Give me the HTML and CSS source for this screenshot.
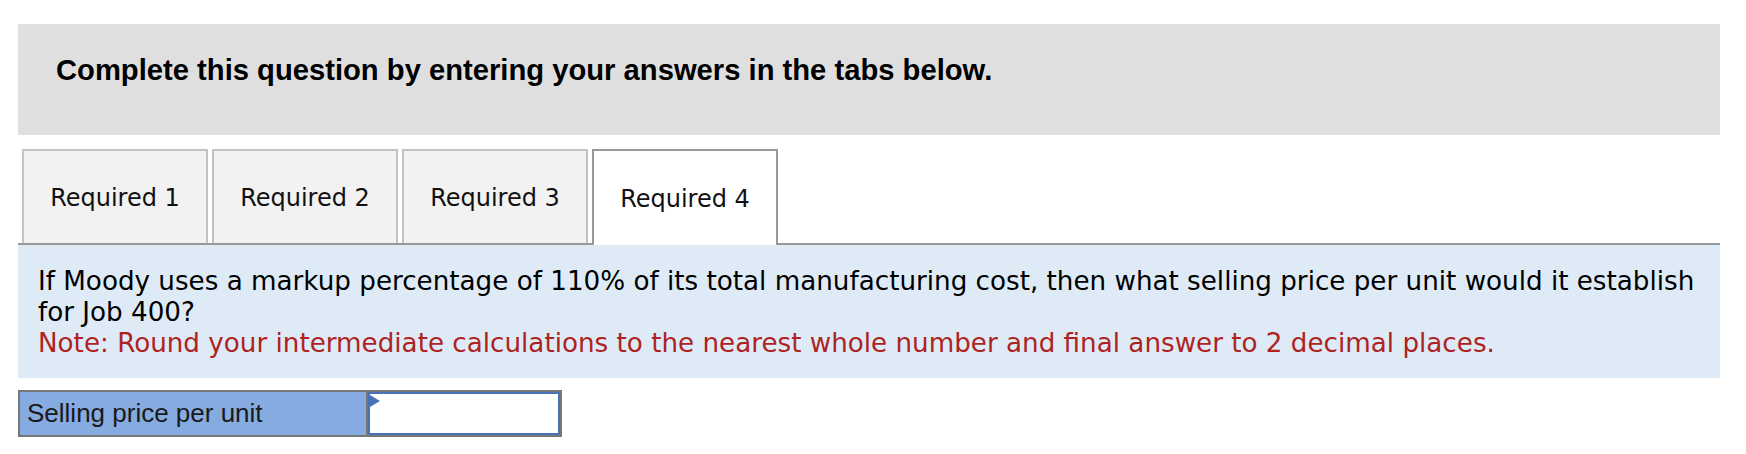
FILE: index.html
```html
<!DOCTYPE html>
<html lang="en">
<head>
<meta charset="utf-8">
<title>Required 4</title>
<link rel="stylesheet" href="styles.css">
</head>
<body>
<div class="page">
  <div class="header">
    <h1 class="header-title">Complete this question by entering your answers in the tabs below.</h1>
  </div>
  <div class="tabs">
    <div class="tab">Required 1</div>
    <div class="tab">Required 2</div>
    <div class="tab">Required 3</div>
    <div class="tab tab-active">Required 4</div>
  </div>
  <div class="panel">
    <p class="question">If Moody uses a markup percentage of 110% of its total manufacturing cost, then what selling price per unit would it establish for Job 400?</p>
    <p class="note">Note: Round your intermediate calculations to the nearest whole number and final answer to 2 decimal places.</p>
  </div>
  <div class="answer">
    <div class="answer-label">Selling price per unit</div>
    <div class="answer-input"><span class="flag"></span></div>
  </div>
</div>
</body>
</html>
```

FILE: styles.css
```css
html, body {
  margin: 0;
  padding: 0;
  background: #ffffff;
}

.page {
  padding: 24px 26px 0 18px;
}

.header {
  height: 111px;
  box-sizing: border-box;
  padding: 30px 0 0 38px;
  background: #dfdfdf;
}

.header-title {
  margin: 0;
  font-family: "Liberation Sans", Arial, sans-serif;
  font-weight: bold;
  font-size: 29.2px;
  line-height: 33px;
  color: #000;
}

.tabs {
  display: flex;
  align-items: flex-end;
  gap: 4px;
  margin-top: 14px;
  padding-left: 4px;
  height: 94px;
  border-bottom: 2px solid #999999;
}

.tab {
  width: 186px;
  height: 94px;
  box-sizing: border-box;
  border: 2px solid #c2c2c2;
  border-bottom: none;
  background: #f2f2f2;
  display: flex;
  align-items: center;
  justify-content: center;
  font-family: "DejaVu Sans", Verdana, sans-serif;
  font-size: 24px;
  color: #111;
  padding-top: 2px;
}

.tab-active {
  height: 96px;
  margin-bottom: -2px;
  border-color: #999999;
  background: #ffffff;
}

.panel {
  background: #deebf7;
  padding: 21px 12px 19px 20px;
  font-family: "DejaVu Sans", Verdana, sans-serif;
  font-size: 26.2px;
  line-height: 31px;
  color: #000;
}

.question, .note {
  margin: 0;
}

.note {
  color: #ae231f;
}

.answer {
  display: flex;
  width: 544px;
  height: 47px;
  box-sizing: border-box;
  margin-top: 12px;
  border: 2px solid #777777;
}

.answer-label {
  width: 348px;
  box-sizing: border-box;
  border-right: 2px solid #777777;
  background: #85abe0;
  padding-left: 7px;
  display: flex;
  align-items: center;
  font-family: "Liberation Sans", Arial, sans-serif;
  font-size: 26px;
  color: #1a1a1a;
}

.answer-input {
  flex: 1;
  position: relative;
  border: 2px solid #4a73b6;
  background: #ffffff;
}

.flag {
  position: absolute;
  left: 0;
  top: 1px;
  width: 0;
  height: 0;
  border-left: 10px solid #4a73b6;
  border-top: 6px solid transparent;
  border-bottom: 6px solid transparent;
}
```
